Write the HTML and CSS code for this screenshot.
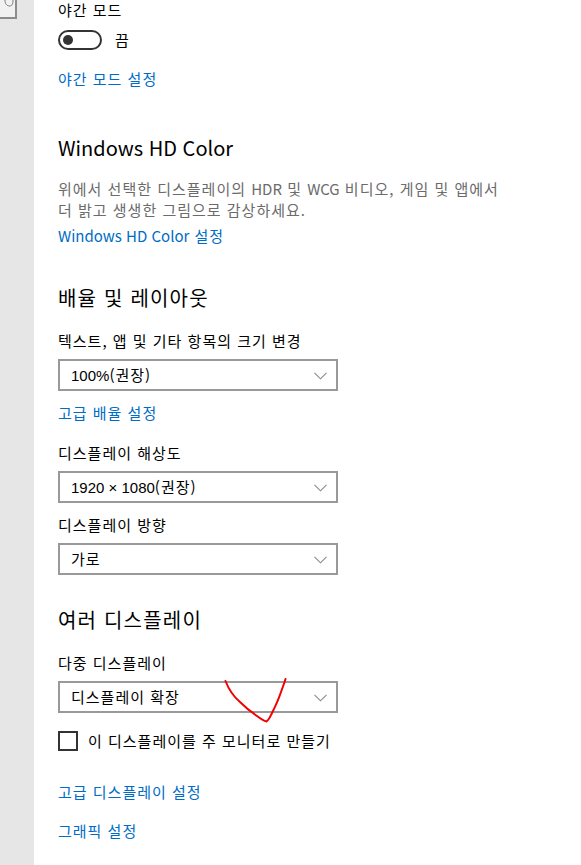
FILE: index.html
```html
<!DOCTYPE html>
<html lang="ko">
<head>
<meta charset="utf-8">
<link rel="stylesheet" href="styles.css">
</head>
<body>
<div class="page">
  <aside class="sidebar">
    <div class="corner-btn">
      <svg width="15" height="8" viewBox="0 0 15 8"><path d="M5 0 C5 4 7 6 9.5 6 C12 6 13 4 13 0" fill="none" stroke="#777" stroke-width="1"/></svg>
    </div>
  </aside>
  <main class="content">
    <div class="label first">야간 모드</div>
    <div class="toggle-row">
      <span class="toggle"><span class="knob"></span></span>
      <span class="toggle-text">끔</span>
    </div>
    <a class="link l-night">야간 모드 설정</a>

    <h2 class="heading h-hd"><span class="lat">Windows HD Color</span></h2>
    <p class="desc">위에서 선택한 디스플레이의 <span class="lat">HDR</span> 및 <span class="lat">WCG</span> 비디오, 게임 및 앱에서<br>더 밝고 생생한 그림으로 감상하세요.</p>
    <a class="link l-hd"><span class="lat">Windows HD Color</span> 설정</a>

    <h2 class="heading h-scale">배율 및 레이아웃</h2>
    <div class="label l-gap">텍스트, 앱 및 기타 항목의 크기 변경</div>
    <div class="select"><span><span class="num">100%</span>(권장)</span><svg class="chev" width="13" height="8" viewBox="0 0 13 8"><path d="M0.5 0.8 L6.5 6.8 L12.5 0.8" fill="none" stroke="#8a8a8a" stroke-width="1.1"/></svg></div>
    <a class="link l-after-select">고급 배율 설정</a>
    <div class="label l-gap2">디스플레이 해상도</div>
    <div class="select"><span><span class="num">1920 × 1080</span>(권장)</span><svg class="chev" width="13" height="8" viewBox="0 0 13 8"><path d="M0.5 0.8 L6.5 6.8 L12.5 0.8" fill="none" stroke="#8a8a8a" stroke-width="1.1"/></svg></div>
    <div class="label l-after-select">디스플레이 방향</div>
    <div class="select"><span>가로</span><svg class="chev" width="13" height="8" viewBox="0 0 13 8"><path d="M0.5 0.8 L6.5 6.8 L12.5 0.8" fill="none" stroke="#8a8a8a" stroke-width="1.1"/></svg></div>

    <h2 class="heading h-multi">여러 디스플레이</h2>
    <div class="label l-gap">다중 디스플레이</div>
    <div class="select"><span>디스플레이 확장</span><svg class="chev" width="13" height="8" viewBox="0 0 13 8"><path d="M0.5 0.8 L6.5 6.8 L12.5 0.8" fill="none" stroke="#8a8a8a" stroke-width="1.1"/></svg></div>
    <label class="check-row">
      <span class="checkbox"></span>
      <span class="check-text">이 디스플레이를 주 모니터로 만들기</span>
    </label>
    <a class="link l-adv">고급 디스플레이 설정</a>
    <a class="link l-gfx">그래픽 설정</a>
  </main>
</div>
<svg class="scribble" width="581" height="865" viewBox="0 0 581 865">
  <path d="M225.5 681 C229 690 234 697 240 702 C246 708 251 712 257 716 C261 719 264 721 266.5 721.5 C269 720 270 717 272 713 C276 705 279 698 281 692 C283 686 284.5 683 285.5 679" fill="none" stroke="#f00000" stroke-width="2" stroke-linecap="round"/>
</svg>
</body>
</html>
```
FILE: styles.css
```css
html, body {
  margin: 0;
  padding: 0;
  background: #ffffff;
}
body {
  font-family: "Noto Sans CJK KR", sans-serif;
  color: #000;
  font-size: 15px;
}
.page {
  display: flex;
  min-height: 865px;
  overflow: hidden;
}
.sidebar {
  width: 34px;
  flex: 0 0 34px;
  background: #e6e6e6;
  min-height: 865px;
}
.corner-btn {
  width: 15px;
  height: 17px;
  background: #f1f1f1;
  border-right: 2px solid #8c8c8c;
  border-bottom: 2px solid #8c8c8c;
  box-sizing: content-box;
  display: flex;
  align-items: flex-start;
}
.content {
  padding-left: 24px;
  flex: 1;
  display: flex;
  flex-direction: column;
  align-items: flex-start;
}
.label, .link, .check-text, .toggle-text, .select span, .desc {
  font-family: "Noto Sans CJK KR", sans-serif;
  font-size: 15px;
  line-height: 20px;
  letter-spacing: 1px;
}
.lat {
  letter-spacing: 0;
}
.select .num {
  font-family: "Liberation Sans", Arial, sans-serif;
  letter-spacing: 0;
}
.label.first { margin-top: 0; }
.toggle-row {
  display: flex;
  align-items: center;
  margin-top: 10px;
  height: 20px;
}
.toggle {
  width: 44px;
  height: 20px;
  box-sizing: border-box;
  border: 2px solid #333;
  border-radius: 10px;
  display: flex;
  align-items: center;
  padding-left: 3px;
}
.knob {
  width: 10px;
  height: 10px;
  border-radius: 50%;
  background: #333;
}
.toggle-text { margin-left: 13px; }
.link {
  color: #006cc6;
  text-decoration: none;
}
.l-night { margin-top: 19px; }
.heading {
  margin: 0;
  font-weight: normal;
  font-size: 20px;
  line-height: 28px;
  letter-spacing: 1.2px;
  font-family: "Noto Sans CJK KR", sans-serif;
}
.h-hd { margin-top: 45px; }
.desc {
  margin: 16px 0 0;
  color: #6b6b6b;
  line-height: 21px;
}
.l-hd { margin-top: 6px; }
.h-scale { margin-top: 38px; }
.l-gap { margin-top: 19px; }
.select {
  margin-top: 8px;
  width: 280px;
  height: 32px;
  box-sizing: border-box;
  border: 2px solid #999;
  display: flex;
  align-items: center;
  justify-content: space-between;
  padding: 0 9px 0 11px;
}
.chev { margin-top: 1px; }
.l-after-select { margin-top: 12px; }
.l-gap2 { margin-top: 20px; }
.h-multi { margin-top: 31px; }
.check-row {
  margin-top: 18px;
  display: flex;
  align-items: center;
  height: 20px;
}
.checkbox {
  width: 20px;
  height: 20px;
  box-sizing: border-box;
  border: 2px solid #333;
}
.check-text { margin-left: 10px; }
.l-adv { margin-top: 31px; }
.l-gfx { margin-top: 19px; }
.scribble {
  position: absolute;
  left: 0;
  top: 0;
  pointer-events: none;
}
```
